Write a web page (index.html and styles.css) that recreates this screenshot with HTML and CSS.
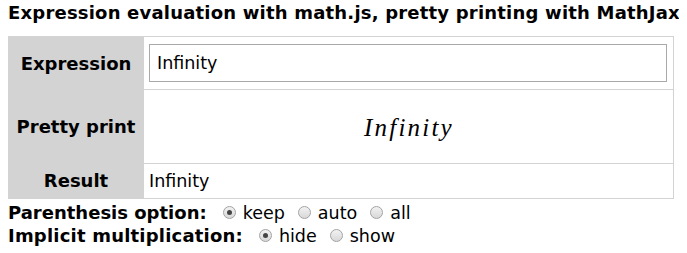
FILE: index.html
```html
<!DOCTYPE html>
<html>
<head>
<meta charset="utf-8">
<link rel="stylesheet" href="styles.css">
</head>
<body>
<h1 class="title">Expression evaluation with math.js, pretty printing with MathJax</h1>
<table class="calc">
  <tr class="row-expr">
    <th>Expression</th>
    <td><input class="expr-input" type="text" value="Infinity"></td>
  </tr>
  <tr class="row-pretty">
    <th>Pretty print</th>
    <td class="pretty"><span class="math">Infinity</span></td>
  </tr>
  <tr class="row-result">
    <th>Result</th>
    <td>Infinity</td>
  </tr>
</table>
<div class="options">
  <div class="opt-line">
    <b class="opt-label">Parenthesis option:</b>
    <label class="opt"><input type="radio" name="paren" checked><span>keep</span></label>
    <label class="opt"><input type="radio" name="paren"><span>auto</span></label>
    <label class="opt"><input type="radio" name="paren"><span>all</span></label>
  </div>
  <div class="opt-line">
    <b class="opt-label wide">Implicit multiplication:</b>
    <label class="opt"><input type="radio" name="impl" checked><span>hide</span></label>
    <label class="opt"><input type="radio" name="impl"><span>show</span></label>
  </div>
</div>
</body>
</html>
```

FILE: styles.css
```css
body {
  margin: 0 8px 8px 8px;
  font-family: "DejaVu Sans", Verdana, sans-serif;
  font-size: 17.5px;
  color: #000;
  background: #fff;
}
.title {
  font-size: 18px;
  font-weight: bold;
  margin: 2px 0 12px 0;
  line-height: 22px;
  letter-spacing: 0.2px;
  white-space: nowrap;
}
.calc {
  border-collapse: collapse;
  width: 666px;
  border: 1px solid #d3d3d3;
}
.calc th {
  background: #d3d3d3;
  width: 124px;
  padding: 0 5px;
  text-align: center;
  font-weight: bold;
  font-size: 18px;
}
.calc td {
  border: 1px solid #d3d3d3;
  padding: 0 6px 0 5px;
}
.row-expr { height: 53px; }
.row-pretty { height: 74px; }
.row-result { height: 35px; }
.expr-input {
  box-sizing: border-box;
  width: 518px;
  height: 38px;
  border: 1px solid #a9a9a9;
  padding: 0 7px;
  font-family: "DejaVu Sans", Verdana, sans-serif;
  font-size: 17.5px;
  margin: 0;
  display: block;
  outline: none;
}
.pretty { text-align: center; }
.math {
  font-family: "Liberation Serif", serif;
  font-style: italic;
  font-size: 25px;
  letter-spacing: 2.2px;
  position: relative;
  left: 1px;
  top: 1px;
}
.options { margin-top: 2px; }
.opt-line {
  display: flex;
  align-items: center;
  height: 23px;
}
.opt-label {
  font-size: 18px;
  margin-right: 4px;
}
.opt-label.wide { letter-spacing: 0.2px; }
.opt {
  display: flex;
  align-items: center;
}
.opt input[type=radio] {
  appearance: none;
  -webkit-appearance: none;
  box-sizing: border-box;
  width: 13px;
  height: 13px;
  margin: 0 7px 0 13px;
  border-radius: 50%;
  border: 1px solid #a3a3a3;
  background: linear-gradient(#f2f2f2, #d8d8d8);
  position: relative;
}
.opt:first-of-type input[type=radio] { margin-left: 12px; }
.opt input[type=radio]:checked::after {
  content: "";
  position: absolute;
  left: 3px;
  top: 3px;
  width: 5px;
  height: 5px;
  border-radius: 50%;
  background: #444;
}
```
